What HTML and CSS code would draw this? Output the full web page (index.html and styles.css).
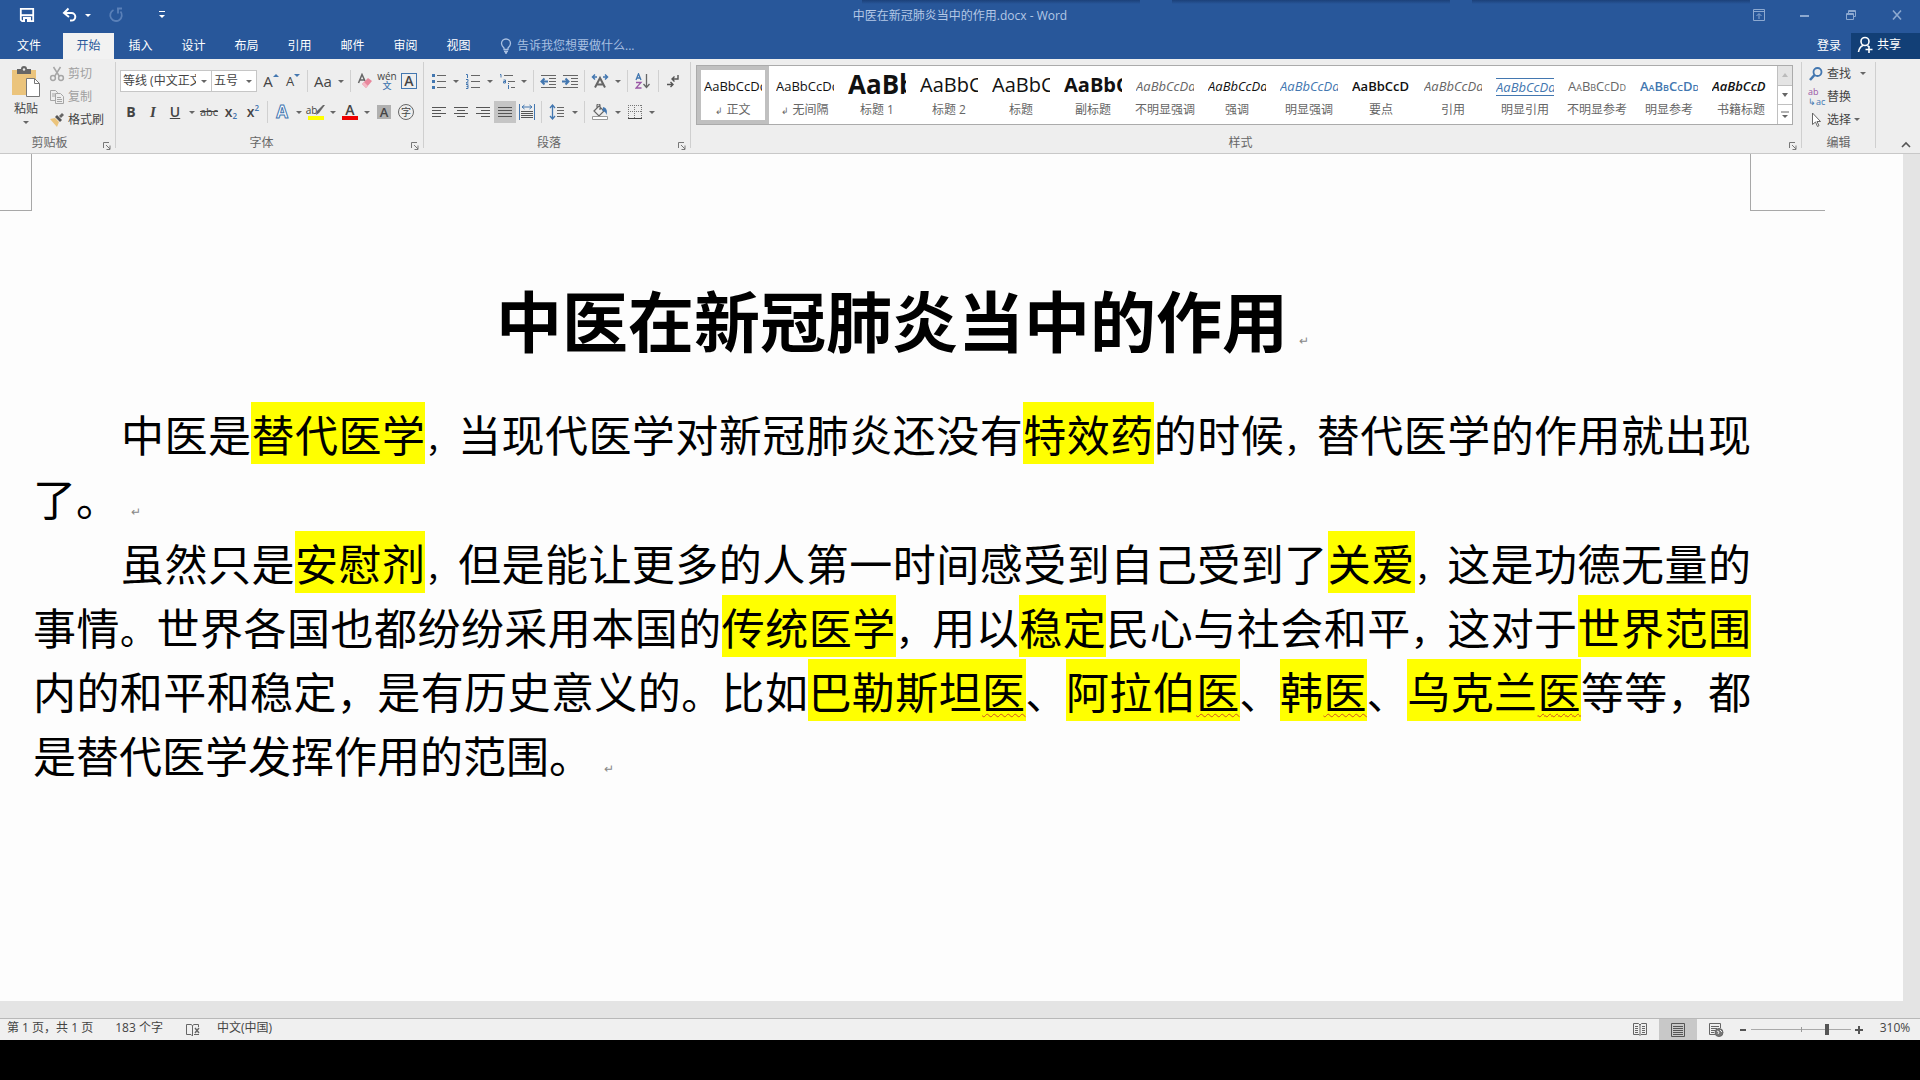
FILE: index.html
```html
<!DOCTYPE html>
<html lang="zh-CN">
<head>
<meta charset="utf-8">
<title>中医在新冠肺炎当中的作用.docx - Word</title>
<link rel="stylesheet" href="styles.css">
</head>
<body>
<header class="titlebar">
  <div class="quick">
    <button class="qbtn save" aria-label="保存"><svg width="16" height="16" viewBox="0 0 16 16"><path d="M1.8 1.8h12.4v12.4H3.2L1.8 12.8z" fill="none" stroke="#fff" stroke-width="1.8"/><path d="M2 7.2h12v2H2z" fill="#fff"/><path d="M4 10h8v5H4z" fill="#fff"/><path d="M6 12h2v3H6z" fill="#28579a"/></svg></button>
    <button class="qbtn undo" aria-label="撤消"><svg width="16" height="16" viewBox="0 0 16 16"><path d="M6.5 1.5L2 6l5 4M2.500 6H9.500a3.800 3.800 0 0 1 0 7.600H8" fill="none" stroke="#fff" stroke-width="2"/></svg></button>
    <button class="arrow light" aria-label="撤消列表"></button>
    <button class="qbtn redo" aria-label="重复"><svg width="16" height="16" viewBox="0 0 16 16"><path d="M5.500 3A5.800 5.800 0 1 0 12.500 4.500M9 1.500h5M10 1v5.500" fill="none" stroke="#5a80b8" stroke-width="1.800"/></svg></button>
    <button class="qbtn more" aria-label="自定义快速访问工具栏"><svg width="8" height="10" viewBox="0 0 8 10"><path d="M1 1.500h6" stroke="#fff"/><path d="M1 5h6L4 8z" fill="#fff"/></svg></button>
  </div>
  <h1 class="filename">中医在新冠肺炎当中的作用.docx - Word</h1>
  <div class="window">
    <button aria-label="功能区显示选项"><svg width="14" height="14" viewBox="0 0 14 14" fill="none" stroke="#8da9d0"><path d="M1.500 1.500h11v11h-11zM1.500 3.500h11M7 11V6M4.500 8L7 5.500 9.500 8"/></svg></button>
    <button aria-label="最小化"><svg width="14" height="14" viewBox="0 0 14 14"><path d="M2 8h9" stroke="#8da9d0" stroke-width="2"/></svg></button>
    <button aria-label="还原"><svg width="14" height="14" viewBox="0 0 14 14" fill="none" stroke="#8da9d0"><path d="M2.500 5.500h7v6h-7zM2.500 6.500h7M4.500 5V2.500h7v6H10M4.500 3.500h7"/></svg></button>
    <button aria-label="关闭"><svg width="14" height="14" viewBox="0 0 14 14"><path d="M3 2.500l8 9M11 2.500l-8 9" stroke="#8da9d0" stroke-width="1.600"/></svg></button>
  </div>
</header>

<nav class="tabs">
  <button class="tab file">文件</button>
  <button class="tab active">开始</button>
  <button class="tab">插入</button>
  <button class="tab">设计</button>
  <button class="tab">布局</button>
  <button class="tab">引用</button>
  <button class="tab">邮件</button>
  <button class="tab">审阅</button>
  <button class="tab">视图</button>
  <button class="tell"><svg width="12" height="16" viewBox="0 0 12 16" fill="none" stroke="#a9c0e2" stroke-width="1.300"><path d="M4 11.500V10C2.500 8.500 1.500 7 1.500 5.500a4.500 4.500 0 0 1 9 0C10.500 7 9.500 8.500 8 10v1.500zM4 13.500h4M5 15h2"/></svg>告诉我您想要做什么...</button>
  <button class="login">登录</button>
  <button class="share"><svg width="17" height="18" viewBox="0 0 17 18" fill="none" stroke="#fff" stroke-width="1.600"><circle cx="8" cy="5.500" r="4"/><path d="M1.500 16c.5-3.500 2-5.500 4.500-6.500M10.500 9.500l1.500 1.500M12 10v7M8.500 13.500h7"/></svg>共享</button>
</nav>

<section class="ribbon">
  <div class="group clipboard">
    <div class="body">
      <button class="paste">
        <svg width="30" height="34" viewBox="0 0 30 34"><path d="M1 4h24v25H1z" fill="#ebc47c"/><path d="M6 3h4a3 3 0 0 1 6 0h4v5H6z" fill="#666"/><circle cx="13" cy="3.500" r="1.200" fill="#eee"/><path d="M15.500 12.500h8l5 5v13h-13z" fill="#fff" stroke="#777"/><path d="M23.500 12.500v5h5" fill="none" stroke="#777"/></svg>
        <span>粘贴</span><i class="caret"></i>
      </button>
      <div class="list">
        <button class="item off"><svg width="16" height="16" viewBox="0 0 16 16" fill="none" stroke="#a6a6a6" stroke-width="1.500"><path d="M4.500 1l6 9.500M11.500 1l-6 9.500"/><circle cx="4" cy="12" r="2.400"/><circle cx="12" cy="12" r="2.400"/></svg>剪切</button>
        <button class="item off"><svg width="16" height="16" viewBox="0 0 16 16" fill="#eee" stroke="#a6a6a6"><path d="M1.500 1.500h5l2 2v8h-7z"/><path d="M6.500 4.500h5l3 3v7h-8zM8 8.500h4M8 10.500h5M8 12.500h5M3 5h3M3 7h3"/></svg>复制</button>
        <button class="item"><svg width="16" height="16" viewBox="0 0 16 16"><path d="M1 7l5-1 4 4-2 5z" fill="#ebc47c"/><path d="M6 5l2-2 5 5-2 2z" fill="#555"/><path d="M10 4l3-3 2 2-3 3z" fill="#666"/></svg>格式刷</button>
      </div>
    </div>
    <div class="caption"><span>剪贴板</span><button class="launch" aria-label="剪贴板选项"><svg width="8" height="8" viewBox="0 0 8 8" fill="none" stroke="#777"><path d="M.5 6V.5H6M3 3l4 4M7 3.500V7.500H3.500"/></svg></button></div>
  </div>
  <div class="rule"></div>

  <div class="group font">
    <div class="row">
      <select class="combo face" aria-label="字体"><option>等线 (中文正文)</option></select>
      <select class="combo size" aria-label="字号"><option>五号</option></select>
      <button class="ib glyph" aria-label="增大字号">A<svg class="tip" width="6" height="3" viewBox="0 0 6 3"><path d="M0 3h6L3 0z" fill="#4377b0"/></svg></button>
      <button class="ib glyph small" aria-label="减小字号">A<svg class="tip" width="6" height="3" viewBox="0 0 6 3"><path d="M0 0h6L3 3z" fill="#4377b0"/></svg></button>
      <i class="sep"></i>
      <button class="ib wide glyph">Aa</button><button class="arrow" aria-label="更改大小写"></button>
      <i class="sep"></i>
      <button class="ib" aria-label="清除格式"><svg width="16" height="16" viewBox="0 0 16 16"><path d="M1.500 10L5 1.500 8 8M3 7h4" fill="none" stroke="#666" stroke-width="1.500"/><path d="M5 11l6-6 4 3-6 7z" fill="#e8879c"/><path d="M5 11l2-2 4 4-2 2z" fill="#f4b8c4"/></svg></button>
      <button class="ib wen"><span>wén</span><b>文</b></button>
      <button class="ib"><span class="boxed">A</span></button>
    </div>
    <div class="row">
      <button class="ib glyph"><b>B</b></button>
      <button class="ib glyph italic">I</button>
      <button class="ib glyph under">U</button><button class="arrow" aria-label="下划线样式"></button>
      <button class="ib strike">abc</button>
      <button class="ib script">x<sub>2</sub></button>
      <button class="ib script">x<sup>2</sup></button>
      <i class="sep"></i>
      <button class="ib effect">A</button><button class="arrow" aria-label="文本效果"></button>
      <button class="ib bar marker" aria-label="突出显示">ab<svg width="11" height="12" viewBox="0 0 11 12"><path d="M10 1L4 9 1 11l1-4 6-6z" fill="#666"/></svg></button><button class="arrow" aria-label="突出显示颜色"></button>
      <button class="ib bar ink">A</button><button class="arrow" aria-label="字体颜色"></button>
      <button class="ib"><span class="shaded">A</span></button>
      <button class="ib"><span class="ring">字</span></button>
    </div>
    <div class="caption"><span>字体</span><button class="launch" aria-label="字体选项"><svg width="8" height="8" viewBox="0 0 8 8" fill="none" stroke="#777"><path d="M.5 6V.5H6M3 3l4 4M7 3.500V7.500H3.500"/></svg></button></div>
  </div>
  <div class="rule"></div>

  <div class="group para">
    <div class="row">
      <button class="ib" aria-label="项目符号"><svg width="16" height="16" viewBox="0 0 16 16"><path d="M6 2.500h9M6 8.500h9M6 14.500h9" stroke="#666"/><path d="M1 1h3v3H1zM1 7h3v3H1zM1 13h3v3H1z" fill="#4377b0"/></svg></button><button class="arrow" aria-label="项目符号库"></button>
      <button class="ib" aria-label="编号"><svg width="16" height="16" viewBox="0 0 16 16"><path d="M6 2.500h9M6 8.500h9M6 14.500h9" stroke="#666"/><path d="M1 1.500h1.500V5M1 6.500h2v2L1 10h2.500M1 11.500h2v4H1M1.500 13.500H3" fill="none" stroke="#4377b0"/></svg></button><button class="arrow" aria-label="编号库"></button>
      <button class="ib" aria-label="多级列表"><svg width="16" height="16" viewBox="0 0 16 16"><path d="M5 2.500h9M9 8.500h7M12 14.500h4" stroke="#666"/><path d="M1 1.500h1V4.500M4.500 7h2v3h-2V8.500H6M9.500 12v4M9.500 10v1" fill="none" stroke="#4377b0"/></svg></button><button class="arrow" aria-label="多级列表库"></button>
      <i class="sep"></i>
      <button class="ib" aria-label="减少缩进"><svg width="16" height="14" viewBox="0 0 16 14"><path d="M1 1.500h15M9 4.500h7M9 7.500h7M9 10.500h7M1 13.500h15" stroke="#666"/><path d="M8 7.500H2M4.500 4.500L1.500 7.500l3 3" fill="none" stroke="#4377b0" stroke-width="2"/></svg></button>
      <button class="ib" aria-label="增加缩进"><svg width="16" height="14" viewBox="0 0 16 14"><path d="M1 1.500h15M9 4.500h7M9 7.500h7M9 10.500h7M1 13.500h15" stroke="#666"/><path d="M0 7.500h6M3.500 4.500l3 3-3 3" fill="none" stroke="#4377b0" stroke-width="2"/></svg></button>
      <i class="sep"></i>
      <button class="ib wide" aria-label="中文版式"><svg width="18" height="14" viewBox="0 0 18 14"><path d="M4 13.500L9 4l5 9.500M6 10.500h6" fill="none" stroke="#666" stroke-width="2"/><path d="M6 3H2M4 .5L1.500 3 4 5.500M12 3h4M14 .5L16.500 3 14 5.500" fill="none" stroke="#4377b0" stroke-width="1.500"/></svg></button><button class="arrow" aria-label="中文版式选项"></button>
      <i class="sep"></i>
      <button class="ib wide" aria-label="排序"><svg width="16" height="16" viewBox="0 0 16 16"><path d="M1 7L3.500.8 6 7M2 5h3" fill="none" stroke="#4377b0" stroke-width="1.300"/><path d="M1 9.500h5L1 15h5.500" fill="none" stroke="#9a57a5" stroke-width="1.300"/><path d="M11.500 1v13M8.500 11l3 3.500 3-3.500" fill="none" stroke="#666" stroke-width="1.300"/></svg></button>
      <i class="sep"></i>
      <button class="ib" aria-label="显示编辑标记"><svg width="14" height="14" viewBox="0 0 14 14" fill="none" stroke="#555" stroke-width="1.400"><path d="M12 1v4H6M8.500 2.500L6 5l2.500 2.500M1 10.500h6M4.500 8L7 10.500 4.500 13"/></svg></button>
    </div>
    <div class="row">
      <button class="ib" aria-label="左对齐"><svg width="14" height="12" viewBox="0 0 14 12"><path d="M0 1.500h14M0 4.500h9M0 7.500h14M0 10.500h9" stroke="#555"/></svg></button>
      <button class="ib" aria-label="居中"><svg width="14" height="12" viewBox="0 0 14 12"><path d="M0 1.500h14M3 4.500h8M0 7.500h14M3 10.500h8" stroke="#555"/></svg></button>
      <button class="ib" aria-label="右对齐"><svg width="14" height="12" viewBox="0 0 14 12"><path d="M0 1.500h14M5 4.500h9M0 7.500h14M5 10.500h9" stroke="#555"/></svg></button>
      <button class="ib on" aria-label="两端对齐"><svg width="14" height="12" viewBox="0 0 14 12"><path d="M0 1.500h14M0 4.500h14M0 7.500h14M0 10.500h14" stroke="#555"/></svg></button>
      <button class="ib" aria-label="分散对齐"><svg width="16" height="16" viewBox="0 0 16 16"><path d="M.5 0v16M15.500 0v16M3 3h10M5.500 1L3 3l2.500 2M10.500 1L13 3l-2.500 2" fill="none" stroke="#4377b0"/><path d="M2 7.500h12M2 9.500h12M2 11.500h12M2 13.500h12" stroke="#555"/></svg></button>
      <i class="sep"></i>
      <button class="ib wide" aria-label="行距"><svg width="16" height="16" viewBox="0 0 16 16"><path d="M3.500 1v14M1 4l2.500-3L6 4M1 12l2.500 3L6 12" fill="none" stroke="#4377b0" stroke-width="1.300"/><path d="M8 3.500h7M8 6.500h7M8 9.500h7M8 12.500h7" stroke="#666"/></svg></button><button class="arrow" aria-label="行距选项"></button>
      <i class="sep"></i>
      <button class="ib wide" aria-label="底纹"><svg width="18" height="16" viewBox="0 0 18 16"><path d="M3 7l5-5 5 5-5 5zM6 4V1.500A1.500 1.500 0 0 1 9 1.500V6" fill="none" stroke="#666" stroke-width="1.200"/><path d="M12 3c4 1 4.500 4 3.500 8-1-3-2-4-4-4z" fill="#4377b0"/><path d="M1.500 12.500h15v3h-15z" fill="#fff" stroke="#999"/></svg></button><button class="arrow" aria-label="底纹颜色"></button>
      <button class="ib" aria-label="边框"><svg width="14" height="14" viewBox="0 0 14 14"><path d="M0 .5h14M0 6.500h14M.5 0v13M6.500 0v13M13.500 0v13" stroke="#777" stroke-dasharray="1 1"/><path d="M0 13.500h14" stroke="#444"/></svg></button><button class="arrow" aria-label="边框选项"></button>
    </div>
    <div class="caption"><span>段落</span><button class="launch" aria-label="段落选项"><svg width="8" height="8" viewBox="0 0 8 8" fill="none" stroke="#777"><path d="M.5 6V.5H6M3 3l4 4M7 3.500V7.500H3.500"/></svg></button></div>
  </div>
  <div class="rule"></div>

  <div class="group styles">
    <div class="gallery">
      <button class="style chosen"><span class="demo">AaBbCcDd</span><span class="name"><small>↲</small> 正文</span></button>
      <button class="style"><span class="demo">AaBbCcDd</span><span class="name"><small>↲</small> 无间隔</span></button>
      <button class="style"><span class="demo huge">AaBb</span><span class="name">标题 1</span></button>
      <button class="style"><span class="demo big">AaBbC</span><span class="name">标题 2</span></button>
      <button class="style"><span class="demo big">AaBbC</span><span class="name">标题</span></button>
      <button class="style"><span class="demo big bold">AaBbC</span><span class="name">副标题</span></button>
      <button class="style"><span class="demo slant pale">AaBbCcDd</span><span class="name">不明显强调</span></button>
      <button class="style"><span class="demo slant">AaBbCcDd</span><span class="name">强调</span></button>
      <button class="style"><span class="demo slant blue">AaBbCcDd</span><span class="name">明显强调</span></button>
      <button class="style"><span class="demo semi">AaBbCcD</span><span class="name">要点</span></button>
      <button class="style"><span class="demo slant pale">AaBbCcDd</span><span class="name">引用</span></button>
      <button class="style"><span class="demo slant blue lined">AaBbCcDd</span><span class="name">明显引用</span></button>
      <button class="style"><span class="demo caps pale">AaBbCcDd</span><span class="name">不明显参考</span></button>
      <button class="style"><span class="demo caps blue semi">AaBbCcDd</span><span class="name">明显参考</span></button>
      <button class="style"><span class="demo slant semi">AaBbCcD</span><span class="name">书籍标题</span></button>
      <div class="scroller">
        <button class="dim" aria-label="上一行"><svg width="6" height="4" viewBox="0 0 6 4"><path d="M0 4h6L3 0z" fill="#bbb"/></svg></button>
        <button aria-label="下一行"><svg width="6" height="4" viewBox="0 0 6 4"><path d="M0 0h6L3 4z" fill="#666"/></svg></button>
        <button aria-label="其他"><svg width="8" height="8" viewBox="0 0 8 8"><path d="M0 1h8" stroke="#666"/><path d="M1 4h6L4 7z" fill="#666"/></svg></button>
      </div>
    </div>
    <div class="caption"><span>样式</span><button class="launch" aria-label="样式选项"><svg width="8" height="8" viewBox="0 0 8 8" fill="none" stroke="#777"><path d="M.5 6V.5H6M3 3l4 4M7 3.500V7.500H3.500"/></svg></button></div>
  </div>
  <div class="rule"></div>

  <div class="group editing">
    <div class="list">
      <button class="item"><svg width="16" height="16" viewBox="0 0 16 16" fill="none" stroke="#4377b0"><circle cx="9.500" cy="6" r="4" stroke-width="1.800"/><path d="M6.500 9L2 14" stroke-width="2.600"/></svg>查找<i class="caret far"></i></button>
      <button class="item"><span class="swap"><span>ab</span><span>↳ac</span></span>替换</button>
      <button class="item"><svg width="16" height="16" viewBox="0 0 16 16"><path d="M4.500 1v11.500l3-2.500 2 4.500 1.500-.8-2-4.200h3.500z" fill="#fff" stroke="#666"/></svg>选择<i class="caret"></i></button>
    </div>
    <div class="caption"><span>编辑</span></div>
  </div>
  <div class="rule"></div>
  <button class="fold" aria-label="折叠功能区"><svg width="10" height="7" viewBox="0 0 10 7"><path d="M1 6l4-4 4 4" fill="none" stroke="#555" stroke-width="1.600"/></svg></button>
</section>

<main class="workspace">
  <article class="page">
    <div class="margins"><i class="corner left"></i><i class="corner right"></i></div>
    <h2 class="heading">中医在新冠肺炎当中的作用<span class="mark">↵</span></h2>
    <p class="para-text">
      <span class="line first">中医是<mark>替代医学</mark><span class="tight">，</span>当现代医学对新冠肺炎还没有<mark>特效药</mark>的时候<span class="tight">，</span>替代医学的作用就出现</span>
      <span class="line last">了。<span class="mark">↵</span></span>
    </p>
    <p class="para-text">
      <span class="line first">虽然只是<mark>安慰剂</mark><span class="tight">，</span>但是能让更多的人第一时间感受到自己受到了<mark>关爱</mark><span class="tight">，</span>这是功德无量的</span>
      <span class="line">事情<span class="snug">。</span>世界各国也都纷纷采用本国的<mark>传统医学</mark><span class="snug">，</span>用以<mark>稳定</mark>民心与社会和平<span class="snug">，</span>这对于<mark>世界范围</mark></span>
      <span class="line">内的和平和稳定<span class="near">，</span>是有历史意义的<span class="near">。</span>比如<mark>巴勒斯坦<u>医</u></mark><span class="near">、</span><mark>阿拉伯<u>医</u></mark><span class="near">、</span><mark>韩<u>医</u></mark><span class="near">、</span><mark>乌克兰<u>医</u></mark>等等<span class="near">，</span>都</span>
      <span class="line last">是替代医学发挥作用的范围。<span class="mark">↵</span></span>
    </p>
  </article>
</main>

<footer class="status">
  <span>第 1 页，共 1 页</span>
  <span>183 个字</span>
  <svg width="16" height="14" viewBox="0 0 16 14" fill="none" stroke="#666"><path d="M7.500 13V2.500L6 1.500H1.500v10H6zM7.500 2.500L9 1.500h4.500V4M9 11.500h5"/><path d="M10 5l4 5M14 5l-4 5" stroke-width="1.400"/></svg>
  <span>中文(中国)</span>
  <div class="controls">
    <div class="views">
      <button aria-label="阅读视图"><svg width="14" height="13" viewBox="0 0 14 13" fill="none" stroke="#666"><path d="M7 12.500V2L5.500.5h-5v11H6zM7 2L8.500.5h5v11H8M2 3.500h3M2 5.500h3M2 7.500h3M2 9.500h3M9 3.500h3M9 5.500h3M9 7.500h3M9 9.500h3"/></svg></button>
      <button class="on" aria-label="页面视图"><svg width="14" height="14" viewBox="0 0 14 14" fill="none" stroke="#555"><path d="M.5.5h13v13H.5zM2 3.500h10M2 5.500h10M2 7.500h10M2 9.500h10M2 11.500h10"/></svg></button>
      <button aria-label="Web 版式视图"><svg width="15" height="14" viewBox="0 0 15 14" fill="none" stroke="#666"><path d="M6 11.500H.5V.5h11V5M2 3.500h8M2 5.500h6M2 7.500h4M2 9.500h3"/><circle cx="10" cy="9.500" r="4" fill="#777" stroke="#666"/><path d="M8 8l2 1-1 2M11 7l2 2" stroke="#eee"/></svg></button>
    </div>
    <button aria-label="缩小"><svg width="8" height="8" viewBox="0 0 8 8"><path d="M1 4h6" stroke="#555" stroke-width="2"/></svg></button>
    <input class="zoom" type="range" min="0" max="100" value="77" aria-label="缩放">
    <button aria-label="放大"><svg width="8" height="8" viewBox="0 0 8 8"><path d="M0 4h8M4 0v8" stroke="#555" stroke-width="2"/></svg></button>
    <button class="percent">310%</button>
  </div>
</footer>
</body>
</html>
```

FILE: styles.css
```css
* { box-sizing: border-box; }

body {
  margin: 0;
  min-height: 100vh;
  padding-bottom: 40px;
  display: flex;
  flex-direction: column;
  background: #000;
  color: #444;
  font: 12px/20px "Open Sans", "Noto Sans CJK SC", sans-serif;
}

button {
  margin: 0;
  padding: 0;
  border: 0;
  background: none;
  color: inherit;
  font: inherit;
  white-space: nowrap;
}

svg { display: block; flex: none; }

/* title bar */
.titlebar {
  display: grid;
  grid-template-columns: 1fr auto 1fr;
  height: 33px;
  background-color: #28579a;
  background-image:
    linear-gradient(#1c4179, #28579a),
    linear-gradient(#1c4179, #28579a),
    linear-gradient(#1c4179, #28579a);
  background-size: 278px 4px;
  background-position: 862px 0, 1172px 0, 1472px 0;
  background-repeat: no-repeat;
}
.quick { display: flex; align-items: center; height: 30px; padding-left: 19px; }
.qbtn { display: flex; justify-content: center; width: 16px; }
.undo { margin-left: 27px; }
.quick .arrow { margin: 0 14px 0 4px; }
.more { margin-left: 30px; }
.filename {
  margin: 0;
  color: #b4c8e6;
  font-size: 12px;
  font-weight: 400;
  line-height: 32px;
}
.window { display: flex; justify-content: flex-end; height: 30px; }
.window button { display: flex; align-items: center; justify-content: center; width: 46px; }

/* tab strip */
.tabs { display: flex; height: 26px; background: #28579a; color: #fff; }
.tab { width: 53px; height: 26px; line-height: 24px; }
.tab.file { width: 58px; margin-right: 5px; }
.tab.active { width: 51px; background: #f2f2f2; color: #28579a; }
.tell { display: flex; align-items: center; gap: 5px; margin-left: 15px; color: #a9c0e2; }
.login { margin-left: auto; margin-right: 10px; line-height: 24px; }
.share {
  display: flex;
  align-items: center;
  gap: 3px;
  width: 69px;
  padding: 0 0 2px 6px;
  background: #123f76;
}

/* ribbon */
.ribbon {
  display: flex;
  height: 95px;
  background: #eee;
  border-bottom: 1px solid #c8c8c8;
}
.rule { flex: none; width: 1px; margin: 3px 0 5px; background: #cfcfcf; }
.group { display: flex; flex-direction: column; flex: none; }
.row { display: flex; align-items: center; height: 22px; padding-left: 4px; }
.row:first-child { margin: 11px 0 9px; }
.caption { display: flex; align-items: flex-end; margin-top: auto; height: 21px; color: #666; }
.caption span { flex: 1; text-align: center; }
.launch { width: 16px; padding: 0 4px 3px; }
.ib { display: flex; align-items: center; justify-content: center; flex: none; width: 22px; height: 22px; }
.wide { width: 24px; }
.ib.on { background: #c5c5c5; }
.sep { flex: none; width: 1px; height: 22px; margin: 0 3px; background: #d0d0d0; }
.arrow { display: flex; flex: none; align-items: center; justify-content: center; width: 12px; height: 22px; }
.arrow::before, .caret::before {
  content: "";
  display: block;
  border: 3px solid transparent;
  border-top-color: #666;
  border-bottom: 0;
}
.arrow.light::before { border-top-color: #fff; }

.clipboard { width: 115px; }
.clipboard .body { display: flex; padding-top: 3px; }
.paste {
  display: flex;
  flex-direction: column;
  align-items: center;
  width: 49px;
  padding: 4px 0 0 3px;
}
.paste span { line-height: 17px; }
.paste .caret { margin-top: 4px; }
.list { display: flex; flex-direction: column; }
.item { display: flex; align-items: center; gap: 3px; height: 23px; }
.item.off { color: #a0a0a0; }

.font { width: 307px; }
.combo {
  appearance: none;
  height: 22px;
  padding: 0 15px 0 2px;
  border: 1px solid #c6c6c6;
  border-radius: 0;
  background-color: #fff;
  background-image: url("data:image/svg+xml,%3Csvg xmlns='http://www.w3.org/2000/svg' width='6' height='3'%3E%3Cpath d='M0 0h6L3 3z' fill='%23666'/%3E%3C/svg%3E");
  background-position: right 4px center;
  background-repeat: no-repeat;
  color: #444;
  font: inherit;
}
.face { width: 92px; }
.size { width: 46px; margin: 0 3px 0 -1px; }
.glyph { font-size: 15px; }
.glyph.small { font-size: 13px; }
.glyph b { font-size: 14px; }
.tip { align-self: flex-start; margin-top: 4px; }
.italic { font-family: "Liberation Serif", serif; font-style: italic; font-weight: 700; }
.under { font-size: 14px; font-weight: 600; text-decoration: underline; }
.strike { font-size: 11px; text-decoration: line-through; }
.script { font-size: 14px; font-weight: 600; line-height: 14px; }
.script sub, .script sup { color: #4377b0; font-size: 8px; line-height: 8px; }
.script sub { align-self: flex-end; margin-bottom: 3px; }
.script sup { align-self: flex-start; margin-top: 3px; }
.wen { flex-direction: column; font-size: 10px; line-height: 10px; }
.wen b { color: #4377b0; font-size: 9px; font-weight: 500; }
.boxed { width: 16px; border: 1px solid #4377b0; font-size: 14px; font-weight: 600; line-height: 14px; text-align: center; }
.effect { color: #fff; font-size: 17px; font-weight: 700; -webkit-text-stroke: 1px #4377b0; }
.bar { padding-bottom: 5px; line-height: 16px; background: linear-gradient(#ff0, #ff0) center bottom 3px / 16px 4px no-repeat; }
.marker { font-size: 10px; align-items: center; }
.marker svg { margin-left: -2px; }
.ink { background-image: linear-gradient(#e00, #e00); font-size: 14px; font-weight: 600; }
.shaded { width: 14px; background: #b0b0b0; font-size: 13px; font-weight: 600; line-height: 14px; text-align: center; }
.ring { width: 16px; height: 16px; border: 1px solid #666; border-radius: 50%; font-size: 10px; line-height: 14px; text-align: center; }

.para { width: 266px; }

/* style gallery */
.styles { flex: 1; min-width: 0; padding-left: 5px; }
.gallery {
  display: flex;
  height: 60px;
  margin: 6px 8px 0 0;
  border: 1px solid #ababab;
  background: #fff;
}
.style {
  flex: 1;
  min-width: 0;
  display: flex;
  flex-direction: column;
  align-items: stretch;
  padding: 4px 3px;
  border: 4px solid transparent;
  border-width: 0 4px;
}
.style.chosen { padding: 0 3px; border-width: 4px; border-color: #c0c0c0; }
.demo {
  height: 32px;
  overflow: hidden;
  color: #111;
  font-size: 13px;
  line-height: 32px;
  text-align: left;
}
.name { align-self: center; color: #666; line-height: 16px; }
.name small { font-size: 9px; }
.huge { font-size: 26px; font-weight: 700; line-height: 28px; }
.big { font-size: 20px; line-height: 30px; }
.bold { font-weight: 700; }
.semi { font-weight: 600; }
.slant { font-style: italic; }
.pale { color: #666; }
.blue { color: #4377b0; }
.caps { font-variant: small-caps; }
.lined {
  height: 18px;
  margin: 8px 0 6px;
  border: 1px solid #4377b0;
  border-width: 1px 0;
  line-height: 16px;
}
.scroller { display: flex; flex: none; flex-direction: column; width: 15px; border-left: 1px solid #c0c0c0; }
.scroller button { display: flex; flex: 1; align-items: center; justify-content: center; }
.scroller button + button { border-top: 1px solid #c0c0c0; }
.scroller .dim { background: #e4e4e4; }

.editing { width: 73px; }
.editing .list { padding: 3px 0 0 6px; }
.caret.far { margin-left: 6px; }
.swap { width: 16px; color: #4377b0; font-size: 9px; line-height: 10px; text-align: left; }
.swap span { display: block; }
.swap span:first-child { color: #9a57a5; }
.fold { display: flex; flex: none; align-items: flex-end; justify-content: center; width: 44px; padding: 0 0 5px 15px; }

/* document */
.workspace {
  flex: 1;
  display: flex;
  padding: 0 17px 17px 0;
  background: #e4e4e4;
}
.page { flex: 1; min-width: 0; padding: 0 152px 0 33px; background: #fdfdfd; }
.margins { display: flex; justify-content: space-between; height: 57px; margin: 0 -74px 0 -33px; }
.corner { border: 0 solid #a8a8a8; border-bottom-width: 1px; }
.corner.left { width: 32px; border-right-width: 1px; }
.corner.right { width: 75px; border-left-width: 1px; }
.heading {
  margin: 72px 0 42px;
  color: #000;
  font-size: 66px;
  font-weight: 700;
  line-height: 76px;
  text-align: center;
  position: relative;
}
.mark { color: #888; font-size: 12px; font-weight: 400; line-height: 12px; }
.heading .mark { position: absolute; margin-left: 11px; bottom: 12px; }
.para-text { margin: 0 0 1px; color: #000; font-size: 43px; line-height: 64px; font-family: "Noto Sans CJK SC", sans-serif; }
.line { display: block; text-align: justify; text-align-last: justify; white-space: nowrap; }
.line.first { padding-left: 88px; }
.line.last { text-align-last: left; }
.last .mark { margin-left: 12px; }
mark { background: #ff0; color: inherit; }
.tight, .snug, .near { line-height: 1; }
.tight { font-size: 32px; }
.snug { font-size: 36px; }
.near { font-size: 40px; }
u { text-decoration: underline wavy #d05020 1px; text-underline-offset: 4px; text-decoration-skip-ink: none; }

/* status bar */
.status {
  display: flex;
  align-items: center;
  gap: 16px;
  height: 22px;
  padding: 0 9px 0 7px;
  border-top: 1px solid #b8b8b8;
  background: #f0f0f0;
}
.status span { margin-right: 6px; line-height: 18px; padding-bottom: 3px; }
.controls { display: flex; align-items: center; gap: 4px; margin-left: auto; }
.views { display: flex; }
.views button { display: flex; align-items: center; justify-content: center; width: 38px; height: 21px; }
.views .on { background: #c8c8c8; }
.zoom {
  appearance: none;
  width: 100px;
  height: 11px;
  margin: 0;
  background:
    linear-gradient(#999, #999) center / 1px 5px no-repeat,
    linear-gradient(#aaa, #aaa) center / 100% 1px no-repeat;
}
.zoom::-webkit-slider-thumb { appearance: none; width: 4px; height: 11px; background: #555; }
.percent { width: 32px; margin-left: 12px; line-height: 18px; padding-bottom: 3px; }
```
